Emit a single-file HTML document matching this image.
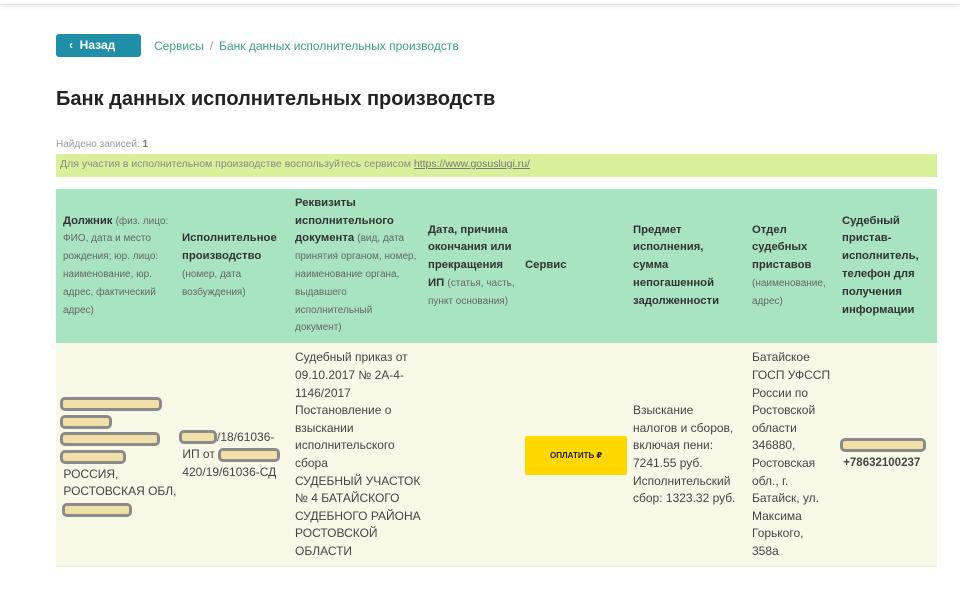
<!DOCTYPE html>
<html><head><meta charset="utf-8"><style>
*{margin:0;padding:0;box-sizing:border-box}
body{width:960px;height:601px;background:#fff;font-family:"Liberation Sans","DejaVu Sans",sans-serif;color:#333;position:relative;overflow:hidden}
.topl{position:absolute;left:0;top:0;width:960px;height:5px;background:#fff;border-bottom:1px solid #ddd;box-shadow:0 2px 6px rgba(0,0,0,.08)}
.btn{position:absolute;left:56px;top:34px;width:85px;height:23px;background:#1f8fa8;border-radius:3px;color:#fff;font-weight:bold;font-size:12px;line-height:23px;padding-left:13px}
.bc{position:absolute;left:154px;top:39px;font-size:12px;color:#3aa07c}
.bc span{color:#999;margin:0 6px}
h1{position:absolute;left:56px;top:88px;font-size:20px;font-weight:bold;color:#222}
.found{position:absolute;left:56px;top:139px;font-size:10px;color:#999}
.found b{color:#777}
.note{position:absolute;left:56px;top:154px;width:881px;height:23px;background:#d9f09a;font-size:10.5px;color:#8a8a8a;line-height:21px;padding-left:4px}
.note u{color:#777}
.hd{position:absolute;left:56px;top:189px;width:881px;height:154px;background:#a8e4c0}
.rw{position:absolute;left:56px;top:343px;width:881px;height:224px;background:#f8f8e6;border-bottom:1px solid #e4e4d8}
.c{position:absolute;display:flex;flex-direction:column;justify-content:center}
.h{top:189px;height:154px;font-size:11.3px;line-height:17.8px;font-weight:bold;color:#333}
.h i{font-style:normal;font-weight:normal;font-size:10px;color:#666}
.b{top:343px;height:224px;font-size:12px;line-height:17.6px;color:#444}
.red{display:inline-block;height:14px;background:#f0e0a8;border:3px solid #8a8a8a;border-radius:5px;vertical-align:middle}
.pay{width:102px;height:39px;background:#ffd800;border-radius:2px;font-size:8px;font-weight:bold;color:#222;text-align:center;line-height:39px}
</style></head><body>
<div class="topl"></div>
<div class="btn">‹&nbsp; Назад</div>
<div class="bc">Сервисы<span>/</span>Банк данных исполнительных производств</div>
<h1>Банк данных исполнительных производств</h1>
<div class="found">Найдено записей: <b>1</b></div>
<div class="note">Для участия в исполнительном производстве воспользуйтесь сервисом <u>https://www.gosuslugi.ru/</u></div>
<div class="hd"></div><div class="rw"></div>

<div class="c h" style="left:63px;width:118px"><div>Должник <i>(физ. лицо: ФИО, дата и место рождения; юр. лицо: наименование, юр. адрес, фактический адрес)</i></div></div>
<div class="c h" style="left:182px;width:110px"><div>Исполнительное производство <i>(номер, дата возбуждения)</i></div></div>
<div class="c h" style="left:295px;width:124px"><div>Реквизиты исполнительного документа <i>(вид, дата принятия органом, номер, наименование органа, выдавшего исполнительный документ)</i></div></div>
<div class="c h" style="left:428px;width:94px"><div>Дата, причина окончания или прекращения ИП <i>(статья, часть, пункт основания)</i></div></div>
<div class="c h" style="left:525px;width:100px"><div>Сервис</div></div>
<div class="c h" style="left:633px;width:100px"><div>Предмет исполнения, сумма непогашенной задолженности</div></div>
<div class="c h" style="left:752px;width:86px"><div>Отдел судебных приставов <i>(наименование, адрес)</i></div></div>
<div class="c h" style="left:842px;width:92px"><div>Судебный пристав-исполнитель, телефон для получения информации</div></div>

<div class="c b" style="left:60px;width:120px;padding-top:4px"><div>
<span class="red" style="width:102px"></span><br><span class="red" style="width:52px"></span><br><span class="red" style="width:100px"></span><br><span class="red" style="width:66px"></span><br>&nbsp;РОССИЯ,<br>&nbsp;РОСТОВСКАЯ ОБЛ,<br><span class="red" style="width:70px;margin-left:2px"></span></div></div>
<div class="c b" style="left:179px;width:112px"><div><span class="red" style="width:38px"></span>/18/61036-<br>&nbsp;ИП от <span class="red" style="width:62px"></span><br>&nbsp;420/19/61036-СД</div></div>
<div class="c b" style="left:295px;width:130px"><div>Судебный приказ от 09.10.2017 № 2А-4-1146/2017<br>Постановление о взыскании исполнительского сбора<br>СУДЕБНЫЙ УЧАСТОК № 4 БАТАЙСКОГО СУДЕБНОГО РАЙОНА РОСТОВСКОЙ ОБЛАСТИ</div></div>
<div class="c b" style="left:525px;width:102px"><div class="pay">ОПЛАТИТЬ ₽</div></div>
<div class="c b" style="left:633px;width:110px"><div>Взыскание<br>налогов и сборов, включая пени: 7241.55 руб. Исполнительский сбор: 1323.32 руб.</div></div>
<div class="c b" style="left:752px;width:80px"><div>Батайское ГОСП УФССП России по Ростовской области 346880, Ростовская обл., г. Батайск, ул. Максима Горького, 358а</div></div>
<div class="c b" style="left:840px;width:96px;font-weight:bold;font-size:11.5px"><div><span class="red" style="width:86px"></span><br>&nbsp;+78632100237</div></div>
</body></html>
